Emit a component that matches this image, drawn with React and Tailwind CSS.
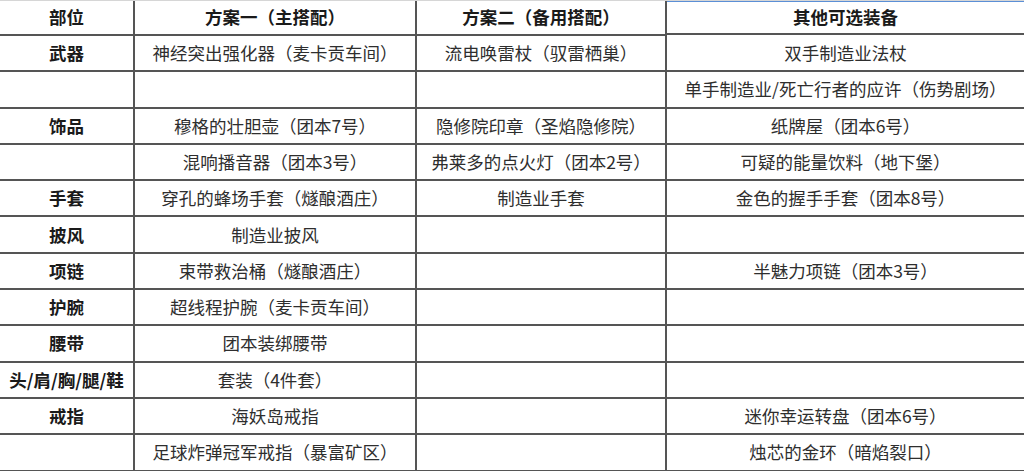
import React from "react";

const HEAD = ["部位", "方案一（主搭配）", "方案二（备用搭配）", "其他可选装备"];

const ROWS = [
  ["武器", "神经突出强化器（麦卡贡车间）", "流电唤雷杖（驭雷栖巢）", "双手制造业法杖"],
  ["", "", "", "单手制造业/死亡行者的应许（伤势剧场）"],
  ["饰品", "穆格的壮胆壶（团本7号）", "隐修院印章（圣焰隐修院）", "纸牌屋（团本6号）"],
  ["", "混响播音器（团本3号）", "弗莱多的点火灯（团本2号）", "可疑的能量饮料（地下堡）"],
  ["手套", "穿孔的蜂场手套（燧酿酒庄）", "制造业手套", "金色的握手手套（团本8号）"],
  ["披风", "制造业披风", "", ""],
  ["项链", "束带救治桶（燧酿酒庄）", "", "半魅力项链（团本3号）"],
  ["护腕", "超线程护腕（麦卡贡车间）", "", ""],
  ["腰带", "团本装绑腰带", "", ""],
  ["头/肩/胸/腿/鞋", "套装（4件套）", "", ""],
  ["戒指", "海妖岛戒指", "", "迷你幸运转盘（团本6号）"],
  ["", "足球炸弹冠军戒指（暴富矿区）", "", "烛芯的金环（暗焰裂口）"],
];

const font = { fontFamily: '"Noto Sans CJK SC", "Noto Sans", sans-serif' };

export default function App() {
  return (
    <div
      className="w-[1024px] h-[471px] bg-white grid grid-cols-[135px_282px_250px_1fr] overflow-hidden border-t border-[#d6d6d6]"
      style={font}
    >
      {/* header */}
      {HEAD.map((h, i) => (
        <div
          key={h}
          className={`flex items-center justify-center border-b-2 border-[#555] text-[17.5px] font-bold text-[#1a1a1a] h-[35px] ${
            i < 3 ? "border-r-2" : "border-t-2 border-t-[#5b8fd6] -mt-px"
          }`}
        >
          {h}
        </div>
      ))}

      {/* body */}
      {ROWS.map((row, r) =>
        row.map((cell, c) => (
          <div
            key={`${r}-${c}`}
            className={`flex items-center justify-center border-b-2 border-[#555] text-[17.5px] whitespace-nowrap h-[36.3px] ${
              c < 3 ? "border-r-2" : ""
            } ${c === 0 ? "font-bold text-[#1a1a1a]" : "text-[#2e2e2e]"}`}
          >
            {cell}
          </div>
        ))
      )}
    </div>
  );
}
